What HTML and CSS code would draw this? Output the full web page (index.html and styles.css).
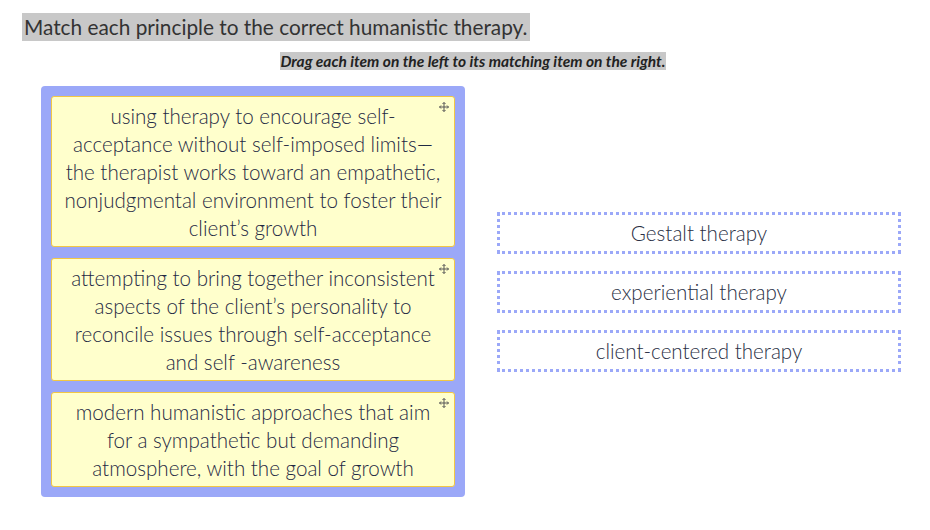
FILE: index.html
```html
<!DOCTYPE html>
<html lang="en">

<head>
    <meta charset="UTF-8" />
    <title>Matching</title>
    <link rel="stylesheet" href="styles.css">
</head>

<body>
    <div class="question">
        <h1 class="prompt">Match each principle to the correct humanistic therapy.</h1>
        <p class="hint"><span>Drag each item on the left to its matching item on the right.</span></p>

        <div class="match">
            <div class="sources">
                <div class="item">
                    <svg class="grip" viewBox="0 0 10 10"><path d="M5 0.5v9M0.5 5h9M3.5 2 5 0.5 6.5 2M3.5 8 5 9.5 6.5 8M2 3.5 0.5 5 2 6.5M8 3.5 9.5 5 8 6.5" /></svg>
                    using therapy to encourage self-<br>acceptance without self-imposed limits—<br>the therapist works toward an empathetic,<br>nonjudgmental environment to foster their<br>client’s growth
                </div>
                <div class="item">
                    <svg class="grip" viewBox="0 0 10 10"><path d="M5 0.5v9M0.5 5h9M3.5 2 5 0.5 6.5 2M3.5 8 5 9.5 6.5 8M2 3.5 0.5 5 2 6.5M8 3.5 9.5 5 8 6.5" /></svg>
                    attempting to bring together inconsistent<br>aspects of the client’s personality to<br>reconcile issues through self-acceptance<br>and self -awareness
                </div>
                <div class="item">
                    <svg class="grip" viewBox="0 0 10 10"><path d="M5 0.5v9M0.5 5h9M3.5 2 5 0.5 6.5 2M3.5 8 5 9.5 6.5 8M2 3.5 0.5 5 2 6.5M8 3.5 9.5 5 8 6.5" /></svg>
                    modern humanistic approaches that aim<br>for a sympathetic but demanding<br>atmosphere, with the goal of growth
                </div>
            </div>

            <div class="targets">
                <div class="target">Gestalt therapy</div>
                <div class="target">experiential therapy</div>
                <div class="target">client-centered therapy</div>
            </div>
        </div>
    </div>
</body>

</html>
```

FILE: styles.css
```css
body {
    margin: 0;
    background: #fff;
    font-family: "Lato", "Open Sans", sans-serif;
    font-weight: 300;
    color: #2a2f45;
}

.question {
    padding: 13px 22px;
}

.prompt {
    display: inline-block;
    margin: 0;
    padding: 0 3px 0 2px;
    background: #c8c8c8;
    font-size: 20.8px;
    font-weight: 400;
    line-height: 28px;
    color: #333;
}

.hint {
    margin: 11px 0 0;
    padding-left: 16px;
    text-align: center;
    font-size: 15.5px;
    line-height: 18px;
}

.hint span {
    background: #c8c8c8;
    font-style: italic;
    font-weight: 700;
    color: #222;
    padding: 0 1px;
}

.match {
    display: flex;
    align-items: center;
    margin-top: 16px;
    padding-left: 19px;
}

.sources {
    width: 404px;
    padding: 10px;
    background: #9ba8f8;
    border-radius: 4px;
    display: flex;
    flex-direction: column;
    gap: 11px;
}

.item {
    position: relative;
    padding: 5px 8px 4px;
    background: #ffffcc;
    border: 1px solid #f2c744;
    border-radius: 3px;
    text-align: center;
    font-size: 20.6px;
    line-height: 28px;
    color: #1f2a44;
}

.grip {
    position: absolute;
    top: 5px;
    right: 5px;
    width: 10px;
    height: 10px;
    fill: none;
    stroke: #555;
    stroke-width: 1;
}

.targets {
    margin-left: 32px;
    width: 404px;
    display: flex;
    flex-direction: column;
    gap: 17px;
}

.target {
    height: 36px;
    border: 3px dotted #9ba8f8;
    text-align: center;
    font-size: 20.6px;
    line-height: 36px;
    color: #2a2f45;
}
```
